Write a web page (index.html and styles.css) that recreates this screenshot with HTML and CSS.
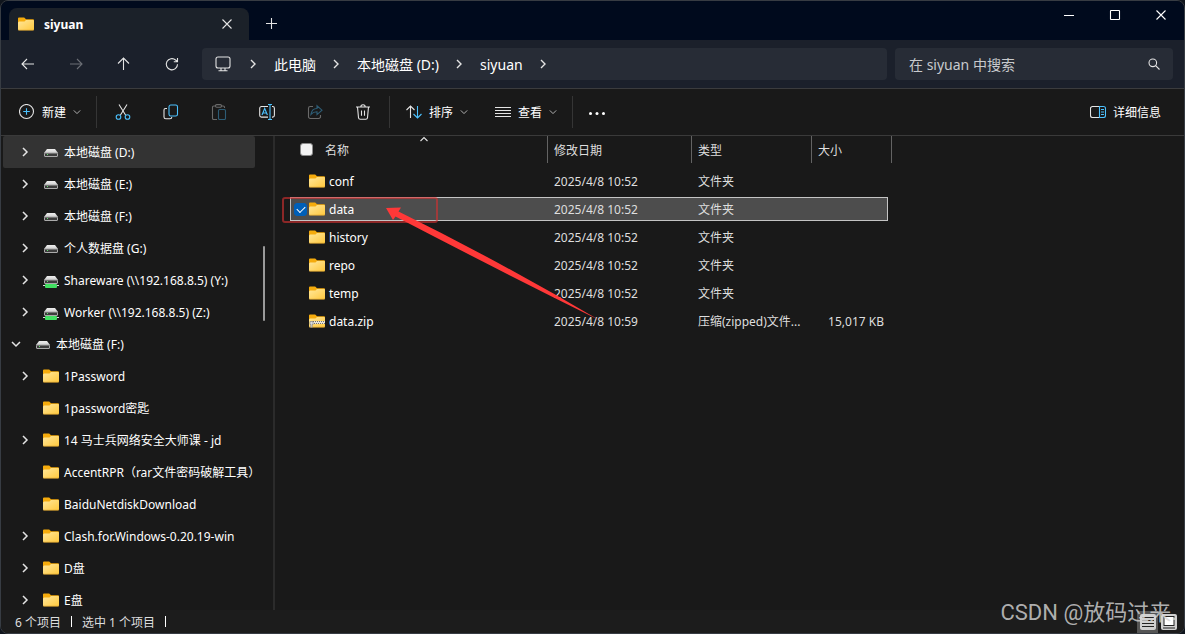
FILE: index.html
```html
<!DOCTYPE html>
<html lang="zh-CN">
<head>
  <meta charset="UTF-8">
  <title>siyuan</title>
  <link rel="stylesheet" href="styles.css">
</head>
<body>
  <svg class="sprite" aria-hidden="true">
    <defs>
      <linearGradient id="folderFill" x1="0" y1="0" x2="1" y2="1">
        <stop offset="0" stop-color="#ffe79b"/>
        <stop offset="1" stop-color="#ffc83d"/>
      </linearGradient>
      <linearGradient id="driveFill" x1="0" y1="0" x2="0" y2="1">
        <stop offset="0" stop-color="#eeeeee"/>
        <stop offset="1" stop-color="#cfcfcf"/>
      </linearGradient>
    </defs>
    <symbol id="folder" viewBox="0 0 16 16">
      <path d="M0 2.5a1 1 0 0 1 1-1h5.2l1.8 1.7h7a1 1 0 0 1 1 1V8H0z" fill="#f5ab0c"/>
      <path d="M0 6.4 1 5.5h5.5L8 4h7a1 1 0 0 1 1 1v8.3a1 1 0 0 1-1 1H1a1 1 0 0 1-1-1z" fill="url(#folderFill)"/>
      <path d="M.3 14.2h15.4" stroke="#dda22b" stroke-width=".7"/>
    </symbol>
    <symbol id="zip" viewBox="0 0 16 16">
      <use href="#folder"/>
      <path d="M2 8h14v3H2z" fill="#e7e4da"/>
      <path d="M4 8.5h12M5 10.5h11" stroke="#77736a" stroke-dasharray="1 1"/>
      <path d="M1 8.5h3v3h-.8v3H1.8v-3H1z" fill="#ddd" stroke="#777" stroke-width=".6"/>
    </symbol>
    <symbol id="drive" viewBox="0 0 16 16">
      <path d="M4 5h8l3 4H1z" fill="url(#driveFill)"/>
      <rect x="1.5" y="9" width="13" height="3.5" rx=".5" fill="#3c3c3c" stroke="#aaa"/>
      <rect x="4" y="10" width="1" height="1" fill="#5fe36c"/>
    </symbol>
    <symbol id="netdrive" viewBox="0 0 16 16">
      <path d="M4 4h8l3 4H1z" fill="url(#driveFill)"/>
      <rect x="1.5" y="8" width="13" height="3.5" rx=".5" fill="#3c3c3c" stroke="#aaa"/>
      <rect x="4" y="9" width="1" height="1" fill="#5fe36c"/>
      <path d="M0 13.5h16" stroke="#ddd"/>
      <rect x="2" y="12" width="12" height="4" rx="1" fill="#42df62"/>
    </symbol>
    <symbol id="right" viewBox="0 0 8 12"><path d="m2 2 4 4-4 4"/></symbol>
    <symbol id="down" viewBox="0 0 10 10"><path d="m1 3 4 4 4-4"/></symbol>
    <symbol id="close" viewBox="0 0 12 12"><path d="m1.5 1.5 9 9m0-9-9 9"/></symbol>
  </svg>

  <div class="window">
    <header class="titlebar">
      <div class="tab">
        <svg class="icon"><use href="#folder"/></svg>
        <span class="tab-title">siyuan</span>
        <button class="tab-close" aria-label="关闭标签页"><svg class="line small"><use href="#close"/></svg></button>
      </div>
      <button class="tab-new" aria-label="新标签页"><svg class="line small" viewBox="0 0 12 12"><path d="M5.5 0v11M0 5.5h11"/></svg></button>
      <div class="window-buttons">
        <button aria-label="最小化"><svg class="line small" viewBox="0 0 12 12"><path d="M1 6.5h10"/></svg></button>
        <button aria-label="最大化"><svg class="line small" viewBox="0 0 12 12"><rect x="1.5" y="1.5" width="9" height="9" rx=".5"/></svg></button>
        <button aria-label="关闭"><svg class="line small"><use href="#close"/></svg></button>
      </div>
    </header>

    <div class="navbar">
      <div class="nav-buttons">
        <button aria-label="后退"><svg class="line icon" viewBox="0 0 16 16"><path d="M14 8H2m5-5L2 8l5 5"/></svg></button>
        <button aria-label="前进" disabled><svg class="line icon" viewBox="0 0 16 16"><path d="M2 8h12M9 3l5 5-5 5"/></svg></button>
        <button aria-label="上移"><svg class="line icon" viewBox="0 0 16 16"><path d="M7.5 14V2m-5.5 5.5L7.5 2 13 7.5"/></svg></button>
        <button aria-label="刷新"><svg class="line icon" viewBox="0 0 16 16"><path d="M13.5 8.2A5.6 5.6 0 1 1 11.6 4L13.5 5.5M13.5 2v3.7H9.8"/></svg></button>
      </div>
      <nav class="address">
        <svg class="line pc" viewBox="0 0 18 18"><rect x="2" y="2" width="14" height="11" rx="2"/><path d="M7 13v2.5M11 13v2.5M4.5 15.8h9"/></svg>
        <svg class="line crumb-arrow"><use href="#right"/></svg>
        <a href="#">此电脑</a>
        <svg class="line crumb-arrow"><use href="#right"/></svg>
        <a href="#">本地磁盘 (D:)</a>
        <svg class="line crumb-arrow"><use href="#right"/></svg>
        <a href="#">siyuan</a>
        <svg class="line crumb-arrow"><use href="#right"/></svg>
      </nav>
      <div class="search">
        <input type="text" placeholder="在 siyuan 中搜索" aria-label="在 siyuan 中搜索">
        <svg class="line small" viewBox="0 0 12 12"><circle cx="4.8" cy="4.8" r="3.8"/><path d="m7.6 7.6 3.9 3.9"/></svg>
      </div>
    </div>

    <div class="toolbar">
      <button class="tool">
        <svg class="line icon" viewBox="0 0 16 16"><circle cx="7.5" cy="7.5" r="7"/><path class="blue" d="M7.5 4.2v6.6M4.2 7.5h6.6"/></svg>
        新建
        <svg class="line caret"><use href="#down"/></svg>
      </button>
      <span class="divider"></span>
      <button class="tool-icon" aria-label="剪切"><svg class="line icon" viewBox="0 0 16 16"><path d="m4 .5 6.7 10.8M12 .5 5.3 11.3"/><circle class="blue" cx="3.5" cy="13" r="2.3"/><circle class="blue" cx="12.5" cy="13" r="2.3"/></svg></button>
      <button class="tool-icon" aria-label="复制"><svg class="line icon" viewBox="0 0 16 16"><path d="M4 4.5H2.5a1.5 1.5 0 0 0-1.5 1.5V13a1.8 1.8 0 0 0 1.8 1.8H7A1.8 1.8 0 0 0 8.8 13"/><rect class="blue" x="6" y="1" width="8.5" height="11" rx="1.8"/></svg></button>
      <button class="tool-icon" aria-label="粘贴" disabled><svg class="line icon" viewBox="0 0 16 16"><path d="M4.5 2H2.8A1.3 1.3 0 0 0 1.5 3.3v10.9a1.3 1.3 0 0 0 1.3 1.3H6M10.5 2h1.7a1.3 1.3 0 0 1 1.3 1.3V4"/><rect x="4.5" y=".6" width="6" height="2.6" rx="1.2"/><rect class="blue" x="7.5" y="5.5" width="7" height="10" rx="1.2"/></svg></button>
      <button class="tool-icon" aria-label="重命名"><svg class="line icon" viewBox="0 0 16 16"><path d="M9 2.5H2.5A1.8 1.8 0 0 0 .7 4.3v7a1.8 1.8 0 0 0 1.8 1.8H9M13 2.5h.6a1.8 1.8 0 0 1 1.8 1.8v7a1.8 1.8 0 0 1-1.8 1.8H13"/><path class="blue" d="m3 11 2.7-6.5L8.4 11M4 9h3.5M9 .5h4M9 15.5h4M11 .5v15"/></svg></button>
      <button class="tool-icon" aria-label="共享" disabled><svg class="line icon" viewBox="0 0 16 16"><path d="M6 2.5H3.3A1.8 1.8 0 0 0 1.5 4.3v8.4a1.8 1.8 0 0 0 1.8 1.8h8.4a1.8 1.8 0 0 0 1.8-1.8V11"/><path class="blue" d="M10 1.8v2.7c-4 0-5.5 2.5-6 5.8C5.5 8.5 7.3 7.8 10 7.8v2.8l5-4.4z"/></svg></button>
      <button class="tool-icon" aria-label="删除"><svg class="line icon" viewBox="0 0 16 16"><path d="M1 3h14M5.8 3a2.2 2.2 0 0 1 4.4 0M2.5 3l1 10.7a1.8 1.8 0 0 0 1.8 1.6h5.4a1.8 1.8 0 0 0 1.8-1.6l1-10.7M6.5 6.5v5.3M9.5 6.5v5.3"/></svg></button>
      <span class="divider"></span>
      <button class="tool">
        <svg class="line icon" viewBox="0 0 16 16"><path d="M4.5 14V2M.5 6l4-4 4 4"/><path class="blue" d="M11.5 2v12m-4-4 4 4 4-4"/></svg>
        排序
        <svg class="line caret"><use href="#down"/></svg>
      </button>
      <button class="tool">
        <svg class="line icon" viewBox="0 0 16 16"><path d="M0 3.5h16M0 6.5h16M0 9.5h16M0 12.5h16"/></svg>
        查看
        <svg class="line caret"><use href="#down"/></svg>
      </button>
      <span class="divider"></span>
      <button class="tool-icon more" aria-label="更多"><svg class="icon" viewBox="0 0 16 16" fill="#fff"><circle cx="1.5" cy="9.5" r="1.5"/><circle cx="8" cy="9.5" r="1.5"/><circle cx="14.5" cy="9.5" r="1.5"/></svg></button>
      <button class="tool details">
        <svg class="line icon" viewBox="0 0 16 16"><path d="M9.5 2.5h-7a2 2 0 0 0-2 2v7a2 2 0 0 0 2 2h7"/><path class="blue" d="M9.5 2.5h4a2 2 0 0 1 2 2v7a2 2 0 0 1-2 2h-4zM11 5.5h3M11 8h3M11 10.5h3"/></svg>
        详细信息
      </button>
    </div>

    <main class="content">
      <aside class="sidebar">
        <ul class="tree">
          <li class="active"><svg class="line arrow"><use href="#right"/></svg><svg class="icon"><use href="#drive"/></svg><a href="#">本地磁盘 (D:)</a></li>
          <li><svg class="line arrow"><use href="#right"/></svg><svg class="icon"><use href="#drive"/></svg><a href="#">本地磁盘 (E:)</a></li>
          <li><svg class="line arrow"><use href="#right"/></svg><svg class="icon"><use href="#drive"/></svg><a href="#">本地磁盘 (F:)</a></li>
          <li><svg class="line arrow"><use href="#right"/></svg><svg class="icon"><use href="#drive"/></svg><a href="#">个人数据盘 (G:)</a></li>
          <li><svg class="line arrow"><use href="#right"/></svg><svg class="icon"><use href="#netdrive"/></svg><a href="#">Shareware (\\192.168.8.5) (Y:)</a></li>
          <li><svg class="line arrow"><use href="#right"/></svg><svg class="icon"><use href="#netdrive"/></svg><a href="#">Worker (\\192.168.8.5) (Z:)</a></li>
          <li class="root"><svg class="line arrow"><use href="#down"/></svg><svg class="icon"><use href="#drive"/></svg><a href="#">本地磁盘 (F:)</a></li>
          <li><svg class="line arrow"><use href="#right"/></svg><svg class="icon"><use href="#folder"/></svg><a href="#">1Password</a></li>
          <li><span class="arrow"></span><svg class="icon"><use href="#folder"/></svg><a href="#">1password密匙</a></li>
          <li><svg class="line arrow"><use href="#right"/></svg><svg class="icon"><use href="#folder"/></svg><a href="#">14 马士兵网络安全大师课 - jd</a></li>
          <li><span class="arrow"></span><svg class="icon"><use href="#folder"/></svg><a href="#">AccentRPR（rar文件密码破解工具）</a></li>
          <li><span class="arrow"></span><svg class="icon"><use href="#folder"/></svg><a href="#">BaiduNetdiskDownload</a></li>
          <li><svg class="line arrow"><use href="#right"/></svg><svg class="icon"><use href="#folder"/></svg><a href="#">Clash.for.Windows-0.20.19-win</a></li>
          <li><svg class="line arrow"><use href="#right"/></svg><svg class="icon"><use href="#folder"/></svg><a href="#">D盘</a></li>
          <li><svg class="line arrow"><use href="#right"/></svg><svg class="icon"><use href="#folder"/></svg><a href="#">E盘</a></li>
        </ul>
        <div class="scrollbar"><div class="thumb"></div></div>
      </aside>

      <section class="files">
        <table>
          <colgroup>
            <col class="col-name"><col class="col-date"><col class="col-type"><col class="col-size"><col class="col-end">
          </colgroup>
          <thead>
            <tr>
              <th>
                <div class="head name-head">
                  <input type="checkbox" aria-label="全选">名称
                  <svg class="line sort" viewBox="0 0 10 6"><path d="m1.5 5 3.5-3.5L8.5 5"/></svg>
                </div>
              </th>
              <th><div class="head">修改日期</div></th>
              <th><div class="head">类型</div></th>
              <th><div class="head open">大小</div></th>
              <th><div class="head"></div></th>
            </tr>
          </thead>
          <tbody>
            <tr><td><label class="name"><input type="checkbox"><svg class="icon"><use href="#folder"/></svg>conf</label></td><td>2025/4/8 10:52</td><td>文件夹</td><td></td><td></td></tr>
            <tr class="selected"><td><label class="name"><input type="checkbox" checked><svg class="icon"><use href="#folder"/></svg>data</label></td><td>2025/4/8 10:52</td><td>文件夹</td><td></td><td></td></tr>
            <tr><td><label class="name"><input type="checkbox"><svg class="icon"><use href="#folder"/></svg>history</label></td><td>2025/4/8 10:52</td><td>文件夹</td><td></td><td></td></tr>
            <tr><td><label class="name"><input type="checkbox"><svg class="icon"><use href="#folder"/></svg>repo</label></td><td>2025/4/8 10:52</td><td>文件夹</td><td></td><td></td></tr>
            <tr><td><label class="name"><input type="checkbox"><svg class="icon"><use href="#folder"/></svg>temp</label></td><td>2025/4/8 10:52</td><td>文件夹</td><td></td><td></td></tr>
            <tr><td><label class="name"><input type="checkbox"><svg class="icon"><use href="#zip"/></svg>data.zip</label></td><td>2025/4/8 10:59</td><td>压缩(zipped)文件...</td><td class="size">15,017 KB</td><td></td></tr>
          </tbody>
        </table>
        <!-- red marker and arrow over the data folder -->
        <div class="marker"></div>
        <svg class="pointer" viewBox="0 0 214 114"><path d="M0 1 15 .5 12.5 4.5Q113 54 213 113 112 63 9.5 9.5L7 13z" fill="#ff3838"/></svg>
      </section>
    </main>

    <footer class="statusbar">
      <span>6 个项目</span><i></i><span>选中 1 个项目</span><i></i>
      <div class="views">
        <button class="on" aria-label="详细信息"><svg class="icon" viewBox="0 0 16 16"><rect width="16" height="16" rx="2" fill="#d0d0d0"/><path d="M2 3.5h12M2 6.5h12M2 9.5h12M2 12.5h12" stroke="#222"/></svg></button>
        <button aria-label="大缩略图"><svg class="icon" viewBox="0 0 16 16"><rect width="16" height="16" rx="2" fill="#d0d0d0"/><rect x="3" y="2.5" width="10" height="9" fill="#fff" stroke="#222"/><path d="M2 14h12" stroke="#222"/></svg></button>
      </div>
    </footer>
    <div class="watermark">CSDN @放码过来.</div>
  </div>
</body>
</html>
```
FILE: styles.css
```css
* {
  box-sizing: border-box;
}

body {
  margin: 0;
  background: #10151d;
  color: #fff;
  font-family: "Noto Sans", "Noto Sans CJK SC", sans-serif;
  font-size: 12px;
}

button {
  display: flex;
  align-items: center;
  justify-content: center;
  padding: 0;
  border: none;
  background: none;
  color: inherit;
  font: inherit;
}

a {
  color: inherit;
  text-decoration: none;
}

svg {
  display: block;
  flex: none;
}

.sprite {
  position: absolute;
  width: 0;
  height: 0;
}

.icon {
  width: 16px;
  height: 16px;
}

.small {
  width: 12px;
  height: 12px;
}

.line {
  fill: none;
  stroke: #e4e4e4;
  stroke-width: 1.1;
}

.blue {
  stroke: #4cc2ff;
}

.window {
  position: relative;
  display: flex;
  flex-direction: column;
  height: 100vh;
  overflow: hidden;
  border: 1px solid #373c43;
  border-radius: 8px;
  background: #191919;
}

/* title bar */
.titlebar {
  display: flex;
  flex: none;
  height: 39px;
  padding-left: 8px;
  background: #000a1d;
}

.tab {
  display: flex;
  align-items: center;
  width: 240px;
  margin-top: 7px;
  padding: 0 16px 0 9px;
  border-radius: 8px 8px 0 0;
  background: #1b2129;
}

.tab-title {
  flex: 1;
  margin-left: 10px;
  font-weight: bold;
}

.tab-new {
  width: 46px;
  margin-top: 7px;
}

.window-buttons {
  display: flex;
  height: 28px;
  margin-left: auto;
}

.window-buttons button {
  width: 46px;
}

.window-buttons .line {
  stroke: #fff;
}

/* navigation */
.navbar {
  display: flex;
  flex: none;
  height: 49px;
  padding: 8px 11px 8px 3px;
  border-bottom: 1px solid #3b3c3e;
  background: #1b202b;
  font-size: 14px;
}

.nav-buttons {
  display: flex;
}

.nav-buttons button {
  width: 48px;
}

button:disabled {
  opacity: 0.4;
}

.address,
.search {
  display: flex;
  align-items: center;
  height: 32px;
  border-radius: 4px;
  background: #272c36;
}

.address {
  flex: 1;
  margin: 0 8px 0 6px;
  padding-left: 12px;
}

.pc {
  width: 18px;
  height: 18px;
  margin-right: 8px;
}

.crumb-arrow {
  width: 8px;
  height: 12px;
  margin: 0 17px 0 16px;
  stroke-width: 1.4;
}

.address .pc + .crumb-arrow {
  margin-left: 9px;
}

.search {
  flex: 0 1 278px;
  padding: 0 13px 0 14px;
}

.search input {
  flex: 1;
  min-width: 0;
  padding: 0;
  border: none;
  outline: none;
  background: none;
  color: #fff;
  font: inherit;
}

.search input::placeholder {
  color: #c8cacd;
}

/* command bar */
.toolbar {
  display: flex;
  flex: none;
  align-items: center;
  height: 47px;
  padding: 0 10px 0 4px;
  border-bottom: 1px solid #3a3a3a;
}

.tool {
  gap: 7px;
  height: 32px;
  padding: 0 13px 0 14px;
}

.tool-icon {
  width: 48px;
  height: 32px;
}

.more {
  width: 44px;
}

.caret {
  width: 8px;
  height: 8px;
  stroke: #c4c4c4;
}

.divider {
  width: 1px;
  height: 32px;
  margin: 0 2px;
  background: #353535;
}

.details {
  margin-left: auto;
}

/* folder tree */
.content {
  display: flex;
  flex: 1;
  min-height: 0;
}

.sidebar {
  display: flex;
  flex: none;
  width: 274px;
  padding-left: 2px;
  border-right: 2px solid #2b2b2b;
  overflow: hidden;
}

.tree {
  flex: 1;
  min-width: 0;
  margin: 0;
  padding: 0;
  list-style: none;
}

.tree li {
  display: flex;
  align-items: center;
  height: 32px;
  padding-left: 18px;
  white-space: nowrap;
}

.tree .active {
  border-radius: 2px;
  background: #333;
}

.tree .arrow {
  flex: none;
  width: 8px;
  height: 12px;
  margin-right: 14px;
  stroke-width: 1.5;
}

.tree a {
  margin-left: 5px;
}

.tree .root {
  padding-left: 8px;
}

.tree .root .arrow {
  width: 10px;
  height: 10px;
}

.scrollbar {
  flex: none;
  width: 18px;
  padding: 110px 8px 0;
}

.thumb {
  height: 75px;
  border-radius: 1px;
  background: #9a9a9a;
}

/* file list */
.files {
  position: relative;
  flex: 1;
  overflow: hidden;
  padding-left: 15px;
}

table {
  width: 602px;
  margin-top: -4px;
  border-spacing: 0 4px;
  table-layout: fixed;
}

.col-name {
  width: 258px;
}

.col-date {
  width: 144px;
}

.col-type {
  width: 120px;
}

.col-size {
  width: 76px;
}

.col-end {
  width: 4px;
}

th {
  height: 29px;
  padding: 0;
  color: #dedede;
  font-weight: normal;
  text-align: left;
  vertical-align: top;
}

.head {
  display: flex;
  align-items: center;
  height: 27px;
  padding-left: 6px;
  border-right: 1px solid #636363;
}

th:last-child .head {
  padding: 0;
}

.head.open {
  border-right: none;
}

.name-head {
  position: relative;
  gap: 12px;
  padding-left: 10px;
}

.sort {
  position: absolute;
  top: 0;
  left: 50%;
  width: 10px;
  height: 6px;
}

input[type="checkbox"] {
  appearance: none;
  flex: none;
  width: 13px;
  height: 13px;
  margin: 0;
  border: 1px solid #8a8a8a;
  border-radius: 3px;
  background: #f3f3f3;
}

td {
  height: 24px;
  padding: 0 0 0 6px;
  color: #dedede;
  white-space: nowrap;
}

td:first-child {
  padding-left: 4px;
}

td:last-child {
  padding: 0;
}

.name {
  display: flex;
  align-items: center;
  color: #fff;
}

.name input {
  opacity: 0;
}

.name .icon {
  margin: 0 4px 0 2px;
}

.name input:checked {
  border-color: #005fb8;
  background: #005fb8;
  opacity: 1;
}

.name input:checked::after {
  content: "";
  display: block;
  width: 7px;
  height: 4px;
  margin: 2px;
  border: solid #fff;
  border-width: 0 0 1px 1px;
  transform: rotate(-45deg);
}

td.size {
  padding: 0 4px 0 0;
  text-align: right;
}

.selected td:not(:last-child) {
  border: solid #c4c4c4;
  border-width: 1px 0;
  background: #4d4d4d;
}

.selected td:first-child {
  padding-left: 3px;
  border-left-width: 1px;
}

.selected td:nth-child(4) {
  border-right-width: 1px;
}

.marker {
  position: absolute;
  top: 61px;
  left: 7px;
  width: 156px;
  height: 26px;
  border: 2px solid rgba(217, 48, 48, 0.6);
  border-radius: 3px;
}

.pointer {
  position: absolute;
  top: 71px;
  left: 111px;
  width: 214px;
  height: 114px;
}

/* status bar */
.statusbar {
  display: flex;
  flex: none;
  align-items: center;
  gap: 10px;
  height: 23px;
  padding: 0 5px 0 14px;
  background: #1c1c1c;
  color: #dedede;
}

.statusbar i {
  width: 1px;
  height: 11px;
  background: #fff;
}

.views {
  display: flex;
  margin-left: auto;
}

.views button {
  width: 21px;
  height: 22px;
}

.views .on {
  background: #555;
}

.watermark {
  position: absolute;
  right: 7px;
  bottom: 4px;
  color: rgba(215, 215, 215, 0.8);
  font-family: Roboto, "Noto Sans CJK SC", sans-serif;
  font-size: 22px;
  line-height: 32px;
  pointer-events: none;
}
```
